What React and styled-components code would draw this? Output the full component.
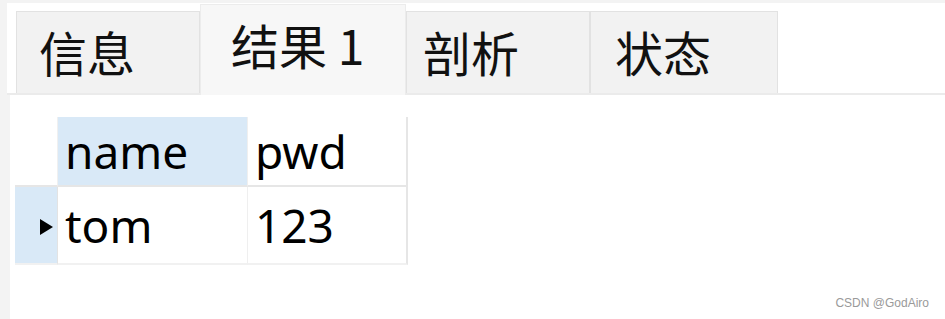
import React from 'react';
import styled, { createGlobalStyle } from 'styled-components';

const GlobalStyle = createGlobalStyle`
  html, body {
    margin: 0;
    padding: 0;
    background: #f3f3f3;
  }
  body {
    font-family: "Noto Sans", "Noto Sans CJK SC", sans-serif;
    color: #000;
  }
`;

const Page = styled.div`
  position: relative;
  width: 945px;
  height: 319px;
  padding: 3px 0 0 7px;
  box-sizing: border-box;
  display: flex;
  flex-direction: column;
  overflow: hidden;
  background: #f3f3f3;
`;

const TabBar = styled.div`
  display: flex;
  align-items: flex-end;
  height: 90px;
  padding-left: 9px;
  background: #fff;
  border-bottom: 2px solid #ebebeb;
`;

const Tab = styled.div`
  box-sizing: border-box;
  width: ${p => p.$w}px;
  height: ${p => (p.$active ? 91 : 82)}px;
  margin-bottom: ${p => (p.$active ? -2 : 0)}px;
  padding-left: ${p => p.$pad}px;
  padding-top: 9px;
  background: ${p => (p.$active ? '#f7f7f7' : '#f2f2f2')};
  border: 1px solid ${p => (p.$active ? '#ececec' : '#e2e2e2')};
  border-bottom: none;
  font-family: "Noto Sans CJK SC", "Noto Sans", sans-serif;
  font-size: 48px;
  line-height: 60px;
  color: #111;
  white-space: nowrap;
`;

const Content = styled.div`
  flex: 1;
  margin-left: 3px;
  padding: 22px 0 0 5px;
  background: #fff;
`;

const Grid = styled.div`
  display: grid;
  grid-template-columns: 43px 190px 160px;
  grid-template-rows: 70px 78px;
  width: 393px;
`;

const Cell = styled.div`
  box-sizing: border-box;
  display: flex;
  align-items: center;
  padding-left: 7px;
  background: ${p => (p.$blue ? '#d9e9f7' : '#fff')};
  border-right: ${p => (p.$right ? '2px solid #e6e6e6' : '1px solid #efefef')};
  border-bottom: ${p => (p.$head ? '2px solid #e6e6e6' : '2px solid #f1f1f1')};
  font-size: 46px;
  line-height: 1;
  color: #000;
`;

const Corner = styled(Cell)`
  border-right: 1px solid #f0f0f0;
  border-bottom: 2px solid #e6e6e6;
`;

const Marker = styled(Cell)`
  justify-content: flex-end;
  padding: 0 4px 0 0;
  border-right: 1px solid #e3e3e3;
  border-bottom: 2px solid #f1f1f1;
`;

const Arrow = styled.span`
  display: block;
  flex: none;
  width: 0;
  height: 0;
  border-top: 8px solid transparent;
  border-bottom: 8px solid transparent;
  border-left: 13px solid #000;
  margin-top: 4px;
`;

const Watermark = styled.div`
  position: absolute;
  right: 16px;
  bottom: 9px;
  font-family: "Liberation Sans", Arial, sans-serif;
  font-size: 12px;
  color: #9a9a9a;
`;

const tabs = [
  { label: '信息', w: 184, pad: 22 },
  { label: '结果 1', w: 206, pad: 30, active: true },
  { label: '剖析', w: 184, pad: 16 },
  { label: '状态', w: 188, pad: 24 },
];

export default function App() {
  return (
    <>
      <GlobalStyle />
      <Page>
        <TabBar>
          {tabs.map(t => (
            <Tab key={t.label} $w={t.w} $pad={t.pad} $active={t.active}>
              {t.label}
            </Tab>
          ))}
        </TabBar>
        <Content>
          <Grid>
            <Corner />
            <Cell $blue $head>name</Cell>
            <Cell $head $right>pwd</Cell>
            <Marker $blue><Arrow /></Marker>
            <Cell>tom</Cell>
            <Cell $right>123</Cell>
          </Grid>
        </Content>
        <Watermark>CSDN @GodAiro</Watermark>
      </Page>
    </>
  );
}
